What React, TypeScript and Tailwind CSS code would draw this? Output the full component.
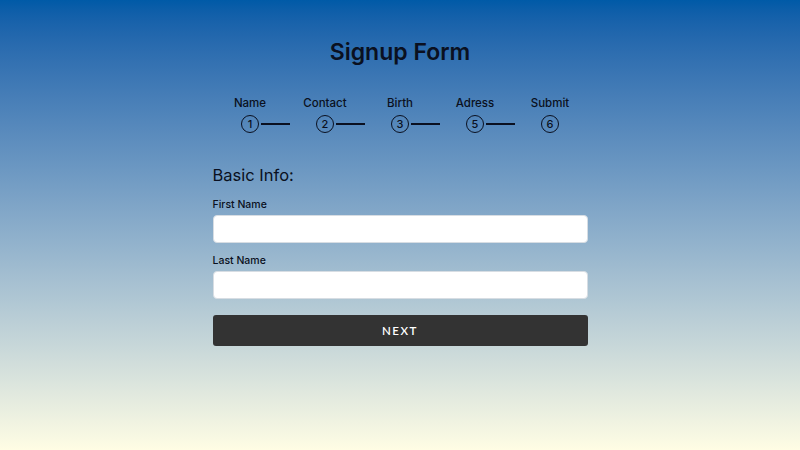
import { useState } from "react";

const steps = [
  { label: "Name", num: "1" },
  { label: "Contact", num: "2" },
  { label: "Birth", num: "3" },
  { label: "Adress", num: "5" },
  { label: "Submit", num: "6" },
];

const SignupPage = () => {
  const [firstName, setFirstName] = useState<string>("");
  const [lastName, setLastName] = useState<string>("");

  return (
    <div className="w-screen h-[450px] overflow-hidden bg-gradient-to-b from-[#005aa7] to-[#fffde4] font-['Inter',sans-serif] text-[#0a1020]">
      <div className="w-[375px] mx-auto pt-[36px] flex flex-col">
        <h1 className="text-center text-[23px] font-semibold leading-[32px]">
          Signup Form
        </h1>

        <div className="flex mt-[27px]">
          {steps.map((step, i) => (
            <div key={step.label} className="w-[75px] flex flex-col items-center">
              <span className="text-[11.5px] leading-[16px] font-medium">
                {step.label}
              </span>
              <div className="relative mt-[4px] w-[18px] h-[18px] rounded-full border-[1.5px] border-[#0a1020] flex items-center justify-center text-[11px] font-medium leading-none">
                {step.num}
                {i < steps.length - 1 && (
                  <span className="absolute left-[19px] top-[6.5px] w-[29px] h-[2px] bg-[#0a1020]" />
                )}
              </div>
            </div>
          ))}
        </div>

        <form className="flex flex-col mt-[30px]" onSubmit={(e) => e.preventDefault()}>
          <h2 className="text-[16.5px] leading-[24px]">Basic Info:</h2>

          <label className="text-[10.5px] font-medium mt-[11px] leading-[14px]">First Name</label>
          <input
            value={firstName}
            onChange={(e) => setFirstName(e.target.value)}
            className="mt-[3px] h-[28px] bg-white rounded-[4px] border border-[#d7dde3] px-2 text-sm outline-none"
          />

          <label className="text-[10.5px] font-medium mt-[11px] leading-[14px]">Last Name</label>
          <input
            value={lastName}
            onChange={(e) => setLastName(e.target.value)}
            className="mt-[3px] h-[28px] bg-white rounded-[4px] border border-[#d7dde3] px-2 text-sm outline-none"
          />

          <button className="mt-[16px] h-[31px] bg-[#333333] rounded-[3px] text-white text-[11.5px] font-semibold tracking-[1.5px] font-['Lato',sans-serif]">
            NEXT
          </button>
        </form>
      </div>
    </div>
  );
};

export default SignupPage;
